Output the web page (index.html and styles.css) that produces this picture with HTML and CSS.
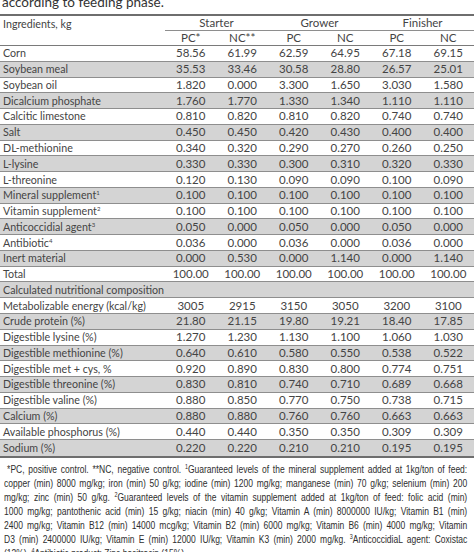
FILE: index.html
```html
<!DOCTYPE html>
<html lang="en">
<head>
<meta charset="utf-8">
<title>Diet composition</title>
<link rel="stylesheet" href="styles.css">
</head>
<body>
<div class="page">
  <p class="caption">according to feeding phase.</p>
  <table class="diet">
    <colgroup>
      <col class="c-label"><col class="c-val"><col class="c-val"><col class="c-val"><col class="c-val"><col class="c-val"><col class="c-val">
    </colgroup>
    <thead>
      <tr class="grp">
        <th class="label">Ingredients, kg</th>
        <th colspan="2" class="g">Starter</th>
        <th colspan="2" class="g">Grower</th>
        <th colspan="2" class="g">Finisher</th>
      </tr>
      <tr class="sub">
        <th class="label"></th>
        <th>PC*</th><th>NC**</th><th>PC</th><th>NC</th><th>PC</th><th>NC</th>
      </tr>
    </thead>
    <tbody>
      <tr><td class="label">Corn</td><td>58.56</td><td>61.99</td><td>62.59</td><td>64.95</td><td>67.18</td><td>69.15</td></tr>
      <tr class="alt"><td class="label">Soybean meal</td><td>35.53</td><td>33.46</td><td>30.58</td><td>28.80</td><td>26.57</td><td>25.01</td></tr>
      <tr><td class="label">Soybean oil</td><td>1.820</td><td>0.000</td><td>3.300</td><td>1.650</td><td>3.030</td><td>1.580</td></tr>
      <tr class="alt"><td class="label">Dicalcium phosphate</td><td>1.760</td><td>1.770</td><td>1.330</td><td>1.340</td><td>1.110</td><td>1.110</td></tr>
      <tr><td class="label">Calcitic limestone</td><td>0.810</td><td>0.820</td><td>0.810</td><td>0.820</td><td>0.740</td><td>0.740</td></tr>
      <tr class="alt"><td class="label">Salt</td><td>0.450</td><td>0.450</td><td>0.420</td><td>0.430</td><td>0.400</td><td>0.400</td></tr>
      <tr><td class="label">DL-methionine</td><td>0.340</td><td>0.320</td><td>0.290</td><td>0.270</td><td>0.260</td><td>0.250</td></tr>
      <tr class="alt"><td class="label">L-lysine</td><td>0.330</td><td>0.330</td><td>0.300</td><td>0.310</td><td>0.320</td><td>0.330</td></tr>
      <tr><td class="label">L-threonine</td><td>0.120</td><td>0.130</td><td>0.090</td><td>0.090</td><td>0.100</td><td>0.090</td></tr>
      <tr class="alt"><td class="label">Mineral supplement<sup>1</sup></td><td>0.100</td><td>0.100</td><td>0.100</td><td>0.100</td><td>0.100</td><td>0.100</td></tr>
      <tr><td class="label">Vitamin supplement<sup>2</sup></td><td>0.100</td><td>0.100</td><td>0.100</td><td>0.100</td><td>0.100</td><td>0.100</td></tr>
      <tr class="alt"><td class="label">Anticoccidial agent<sup>3</sup></td><td>0.050</td><td>0.000</td><td>0.050</td><td>0.000</td><td>0.050</td><td>0.000</td></tr>
      <tr><td class="label">Antibiotic<sup>4</sup></td><td>0.036</td><td>0.000</td><td>0.036</td><td>0.000</td><td>0.036</td><td>0.000</td></tr>
      <tr class="alt"><td class="label">Inert material</td><td>0.000</td><td>0.530</td><td>0.000</td><td>1.140</td><td>0.000</td><td>1.140</td></tr>
      <tr><td class="label">Total</td><td>100.00</td><td>100.00</td><td>100.00</td><td>100.00</td><td>100.00</td><td>100.00</td></tr>
      <tr class="alt"><td class="label" colspan="7">Calculated nutritional composition</td></tr>
      <tr><td class="label">Metabolizable energy (kcal/kg)</td><td>3005</td><td>2915</td><td>3150</td><td>3050</td><td>3200</td><td>3100</td></tr>
      <tr class="alt"><td class="label">Crude protein (%)</td><td>21.80</td><td>21.15</td><td>19.80</td><td>19.21</td><td>18.40</td><td>17.85</td></tr>
      <tr><td class="label">Digestible lysine (%)</td><td>1.270</td><td>1.230</td><td>1.130</td><td>1.100</td><td>1.060</td><td>1.030</td></tr>
      <tr class="alt"><td class="label">Digestible methionine (%)</td><td>0.640</td><td>0.610</td><td>0.580</td><td>0.550</td><td>0.538</td><td>0.522</td></tr>
      <tr><td class="label">Digestible met + cys, %</td><td>0.920</td><td>0.890</td><td>0.830</td><td>0.800</td><td>0.774</td><td>0.751</td></tr>
      <tr class="alt"><td class="label">Digestible threonine (%)</td><td>0.830</td><td>0.810</td><td>0.740</td><td>0.710</td><td>0.689</td><td>0.668</td></tr>
      <tr><td class="label">Digestible valine (%)</td><td>0.880</td><td>0.850</td><td>0.770</td><td>0.750</td><td>0.738</td><td>0.715</td></tr>
      <tr class="alt"><td class="label">Calcium (%)</td><td>0.880</td><td>0.880</td><td>0.760</td><td>0.760</td><td>0.663</td><td>0.663</td></tr>
      <tr><td class="label">Available phosphorus (%)</td><td>0.440</td><td>0.440</td><td>0.350</td><td>0.350</td><td>0.309</td><td>0.309</td></tr>
      <tr class="alt last"><td class="label">Sodium (%)</td><td>0.220</td><td>0.220</td><td>0.210</td><td>0.210</td><td>0.195</td><td>0.195</td></tr>
    </tbody>
  </table>
  <div class="notes">
    <div class="notes-inner">
      <div class="line first">*PC, positive control. **NC, negative control. <sup>1</sup>Guaranteed levels of the mineral supplement added at 1kg/ton of feed:</div>
      <div class="line">copper (min) 8000 mg/kg; iron (min) 50 g/kg; iodine (min) 1200 mg/kg; manganese (min) 70 g/kg; selenium (min) 200</div>
      <div class="line">mg/kg; zinc (min) 50 g/kg. <sup>2</sup>Guaranteed levels of the vitamin supplement added at 1kg/ton of feed: folic acid (min)</div>
      <div class="line">1000 mg/kg; pantothenic acid (min) 15 g/kg; niacin (min) 40 g/kg; Vitamin A (min) 8000000 IU/kg; Vitamin B1 (min)</div>
      <div class="line">2400 mg/kg; Vitamin B12 (min) 14000 mcg/kg; Vitamin B2 (min) 6000 mg/kg; Vitamin B6 (min) 4000 mg/kg; Vitamin</div>
      <div class="line">D3 (min) 2400000 IU/kg; Vitamin E (min) 12000 IU/kg; Vitamin K3 (min) 2000 mg/kg. <sup>3</sup>AnticoccidiaL agent: Coxistac</div>
      <div class="line end">(12%). <sup>4</sup>Antibiotic product: Zinc bacitracin (15%).</div>
    </div>
  </div>
</div>
</body>
</html>
```

FILE: styles.css
```css
html, body {
  margin: 0;
  padding: 0;
  background: #ffffff;
}

.page {
  width: 474px;
  height: 552px;
  overflow: hidden;
  color: #444444;
  font-family: Lato, "Open Sans", sans-serif;
}

.caption {
  margin: -5px 0 5px 2px;
  font-size: 13.5px;
  line-height: 14px;
  height: 14px;
  color: #333333;
  font-weight: 400;
}

.diet {
  width: 474px;
  table-layout: fixed;
  border-collapse: separate;
  border-spacing: 0;
  border-top: 2px solid #6e6e6e;
  border-bottom: 2px solid #6e6e6e;
  font-size: 11.5px;
}

.c-label { width: 165px; }
.c-val { width: 51.5px; }

.diet th,
.diet td {
  box-sizing: border-box;
  padding: 0;
  font-weight: 400;
  text-align: center;
  white-space: nowrap;
  line-height: 14px;
  border-bottom: 1px solid #8e8e8e;
  height: 15.77px;
}

.diet .label {
  text-align: left;
  padding-left: 3px;
  font-size: 10.7px;
}

.diet thead th {
  height: 15px;
}

.diet .grp th.label {
  border-bottom: none;
}

.diet .grp th.g {
  border-bottom: 1px solid #8e8e8e;
}

.diet .sub th {
  border-bottom: 1px solid #7a7a7a;
}

.diet tr.alt td {
  background: #d4d4d4;
}

.diet tr.last td {
  border-bottom: none;
}

.diet sup {
  font-size: 6px;
  line-height: 0;
  vertical-align: 4px;
}

.notes {
  margin-top: 4px;
  padding-left: 4px;
  color: #2e2e2e;
}

.notes-inner {
  width: 600px;
  transform: scaleX(0.772);
  transform-origin: 0 0;
  font-family: "Liberation Sans", Arial, sans-serif;
  font-size: 11px;
  line-height: 14px;
}

.notes .line {
  text-align: justify;
  text-align-last: justify;
}

.notes .line.first {
  padding-left: 4px;
}

.notes .line.end {
  text-align-last: left;
}

.notes sup {
  font-size: 7px;
  line-height: 0;
  vertical-align: 4px;
}
```
